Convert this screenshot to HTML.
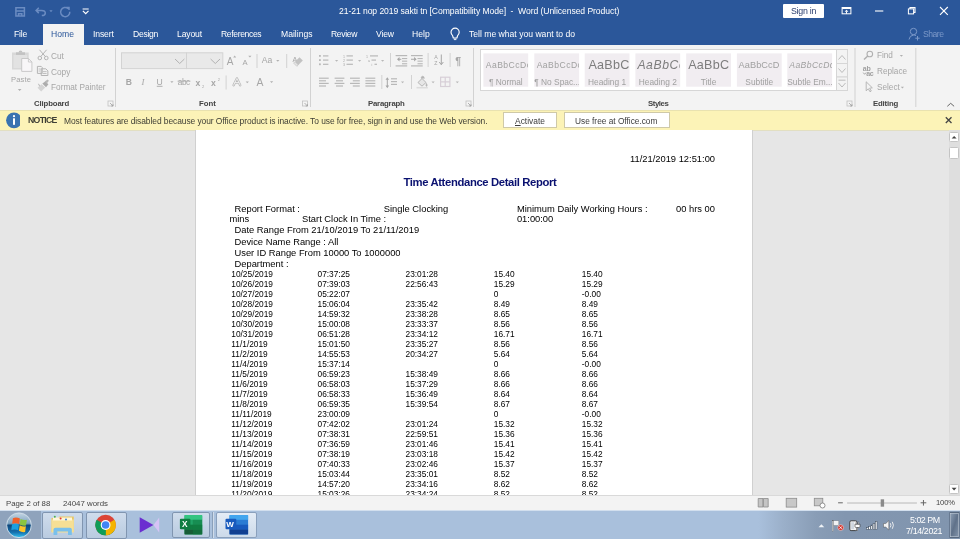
<!DOCTYPE html>
<html><head><meta charset="utf-8">
<style>
*{margin:0;padding:0;box-sizing:border-box}
html,body{width:960px;height:539px;overflow:hidden;background:#e6e6e6;font-family:"Liberation Sans",sans-serif}
.a{position:absolute;white-space:nowrap;will-change:transform}
#title{left:0;top:0;width:960px;height:45px;background:#2b579a}
#ribbon{left:0;top:45px;width:960px;height:65px;background:#f3f3f3}
#notice{left:0;top:110px;width:960px;height:20px;background:#fcf3b7;border-top:1px solid #e9e2b0}
#docarea{left:0;top:130px;width:960px;height:365px;background:#e6e6e6}
#page{left:195px;top:130px;width:558px;height:365px;background:#fff;border-left:1px solid #d0d0d0;border-right:1px solid #d0d0d0}
#status{left:0;top:495px;width:960px;height:15px;background:#f3f3f3}
#taskbar{left:0;top:510px;width:960px;height:29px;background:linear-gradient(90deg,#a9c0dc 0%,#a9c0dc 79%,#9bb0ca 81.5%,#899db6 85%,#8296b0 88%,#8195ae 100%);border-top:1px solid #d2dfee}
.tab{color:#fff;font-size:8.6px;top:29px}
.ui{color:#a6a6a6;font-size:8.6px}
.grp{color:#444;font-size:8.6px;font-weight:bold}
.sep{background:#d5d5d5;width:1px}
.doc{font-size:9.35px;color:#000}
.tb{font-size:8.34px;color:#000}
</style></head><body>
<div id="title" class="a"></div>
<div id="ribbon" class="a"></div>

<!-- QAT -->
<svg class="a" style="left:0;top:0" width="100" height="22" viewBox="0 0 100 22">
 <g fill="none" stroke="#6b8cc2" stroke-width="1.5">
  <path d="M15.9 7.8 H24.4 V15.9 H15.9 Z"/>
  <path d="M15.9 11 H24.4"/>
  <path d="M18.5 15.9 V13.8 H21.8 V15.9"/>
  <path d="M36.3 10.4 H41.5 Q45.3 10.4 45.3 13 Q45.3 15.6 41.8 15.6 M38.8 7.7 L36.1 10.4 L38.8 13.1"/>
  <path d="M68.2 8.6 A4.6 4.6 0 1 0 69.8 11.7 M66.4 7.4 L69 7.4 L69 10"/>
 </g>
 <path d="M49.4 10.3 H52.6 L51 12.2 Z" fill="#6b8cc2"/>
 <path d="M82.6 9 H88.7 M82.9 10.8 L85.7 13.7 L88.5 10.8" fill="none" stroke="#fff" stroke-width="1.2"/>
</svg>
<div class="a" style="left:338.7px;top:6px;color:#fff;font-size:8.6px;letter-spacing:-0.07px">21-21 nop 2019 sakti tn [Compatibility Mode]&nbsp; -&nbsp; Word (Unlicensed Product)</div>
<div class="a" style="left:783px;top:4px;width:41px;height:13.5px;background:#fff;border-radius:1px;color:#2e4170;font-size:8.8px;text-align:center;line-height:15px;letter-spacing:-0.25px">Sign in</div>
<svg class="a" style="left:835px;top:0" width="125" height="22" viewBox="835 0 125 22">
 <rect x="842.1" y="7.5" width="8.8" height="6.3" fill="none" stroke="#fff" stroke-width="1"/>
 <rect x="842.1" y="7.2" width="8.8" height="1.8" fill="#fff"/>
 <path d="M844.6 11.8 L846.5 9.8 L848.4 11.8 Z" fill="#fff"/>
 <path d="M846.5 11.5 V13.8" stroke="#fff" stroke-width="1"/>
 <path d="M875 11 H883.3" stroke="#fff" stroke-width="1.1"/>
 <rect x="908.4" y="8.9" width="5.2" height="5" fill="none" stroke="#fff" stroke-width="1"/>
 <path d="M910 8.9 V7.6 H915 V12.4 H913.6" fill="none" stroke="#fff" stroke-width="1.1"/>
 <path d="M940 7 L947.8 14.8 M947.8 7 L940 14.8" stroke="#fff" stroke-width="1.1"/>
</svg>
<!-- tabs -->
<div class="a" style="left:43px;top:24px;width:40.5px;height:21px;background:#f3f3f3"></div>
<div class="a tab" style="left:13.7px;letter-spacing:-0.15px">File</div>
<div class="a tab" style="left:51.3px;color:#2b579a">Home</div>
<div class="a tab" style="left:93px;letter-spacing:-0.12px">Insert</div>
<div class="a tab" style="left:132.5px;letter-spacing:-0.29px">Design</div>
<div class="a tab" style="left:177px;letter-spacing:-0.13px">Layout</div>
<div class="a tab" style="left:221px;letter-spacing:-0.37px">References</div>
<div class="a tab" style="left:280.5px">Mailings</div>
<div class="a tab" style="left:330.7px;letter-spacing:-0.36px">Review</div>
<div class="a tab" style="left:375.5px;letter-spacing:-0.18px">View</div>
<div class="a tab" style="left:412px">Help</div>
<svg class="a" style="left:445px;top:24px" width="20" height="20" viewBox="445 24 20 20">
 <path d="M453.3 38 L452.6 35.6 Q451 34.2 451 32.3 A4.1 4.1 0 0 1 459.2 32.3 Q459.2 34.2 457.6 35.6 L456.9 38 Z" fill="none" stroke="#fff" stroke-width="1.15" stroke-linejoin="round"/>
 <path d="M453.8 39.3 H456.4" stroke="#dfe6f2" stroke-width="1.6"/>
</svg>
<div class="a tab" style="left:468.7px">Tell me what you want to do</div>
<svg class="a" style="left:908px;top:27px" width="14" height="14" viewBox="0 0 14 14">
 <circle cx="5.5" cy="4.5" r="3.2" fill="none" stroke="#7b98c8" stroke-width="1"/>
 <path d="M1 12.5 Q1.5 8.5 5.5 8 Q7 8 8 8.6 M9.5 9 V13.5 M7.3 11.2 H11.7" fill="none" stroke="#7b98c8" stroke-width="1"/>
</svg>
<div class="a tab" style="left:922.8px;color:#7b98c8;letter-spacing:-0.5px">Share</div>


<!-- ribbon icons -->
<svg class="a" style="left:0;top:45px" width="960" height="65" viewBox="0 45 960 65">
 <g id="seps" fill="#d2d2d2">
  <rect x="115" y="48" width="1" height="59"/>
  <rect x="310" y="48" width="1" height="59"/>
  <rect x="473" y="48" width="1" height="59"/>
  <rect x="854.5" y="48" width="1" height="59"/>
  <rect x="915.3" y="48" width="1" height="59"/>
  <rect x="256.5" y="54" width="1" height="14"/>
  <rect x="286.2" y="54" width="1" height="14"/>
  <rect x="225.6" y="75.5" width="1" height="14"/>
  <rect x="390" y="53" width="1" height="14"/>
  <rect x="427.6" y="53" width="1" height="14"/>
  <rect x="449.6" y="53" width="1" height="14"/>
  <rect x="381.3" y="75" width="1" height="14"/>
  <rect x="411" y="75" width="1" height="14"/>
 </g>
 <!-- clipboard -->
 <rect x="12" y="52.5" width="16.7" height="17" fill="#d8d8d8"/>
 <rect x="13.5" y="55" width="13.7" height="13" fill="#e2e2e2"/>
 <rect x="16" y="52.3" width="9" height="2.6" fill="#c2c2c2"/>
 <path d="M18.6 52.5 Q18.6 50.6 20.5 50.6 Q22.4 50.6 22.4 52.5 Z" fill="#c2c2c2"/>
 <path d="M21.7 58.5 H28.4 L31.9 62 V71.4 H21.7 Z" fill="#f8f6f8" stroke="#c4c4c4" stroke-width="0.9"/>
 <path d="M28.4 58.5 V62 H31.9" fill="none" stroke="#c4c4c4" stroke-width="0.8"/>
 <path d="M17.8 89 H21.5 L19.65 91 Z" fill="#b0b0b0"/>
 <g fill="none" stroke="#b4b4b4" stroke-width="1">
  <path d="M39.5 49.8 L45.3 56.5 M46.6 49.8 L40.8 56.5"/>
  <circle cx="39.8" cy="58" r="1.8"/><circle cx="46.3" cy="58" r="1.8"/>
  <path d="M37.4 66.4 H41.2 L42.2 67.4 V73.4 H37.4 Z"/>
  <path d="M41.2 68.8 H45.8 L47.9 70.9 V75.5 H41.2 Z"/>
  <path d="M38.6 69 H40.6 M38.6 71 H40.2 M42.7 71.6 H46.6 M42.7 73.5 H46.6" stroke-width="0.8"/>
  <path d="M38.5 83.8 L40.8 88.5"/>
 </g>
 <path d="M37.5 87.8 L41.6 84.2 L45.2 87.6 L41.2 91.6 Z" fill="#d4d4d4"/>
 <path d="M42.3 83.6 L45.3 81.4 L48.4 84.2 L46 87.2 Z" fill="#acacac"/>
 <path d="M44.6 81.6 L47.6 79.5 L48.9 80.8 L46.8 83.6 Z" fill="#b8b8b8"/>
 <rect x="108" y="101" width="5" height="5" fill="none" stroke="#c0c0c0" stroke-width="0.8"/>
 <path d="M110 103 L113 106 M111.2 106 H113 V104.2" fill="none" stroke="#a0a0a0" stroke-width="0.8"/>
 <!-- font -->
 <rect x="121.5" y="52.8" width="65" height="15.8" fill="#e9e9e9" stroke="#d3d3d3" stroke-width="1"/>
 <rect x="186.5" y="52.8" width="36.3" height="15.8" fill="#e9e9e9" stroke="#d3d3d3" stroke-width="1"/>
 <path d="M175 59 L179.7 63.5 L184.4 59 M210.6 59 L215.3 63.5 L220 59" fill="none" stroke="#ababab" stroke-width="0.9"/>
 <g fill="#a6a6a6" font-family="Liberation Sans" >
  <text x="226.8" y="64.8" font-size="10">A</text>
  <text x="242.6" y="64.8" font-size="7.6">A</text>
  <text x="261.8" y="63.3" font-size="8.6">Aa</text>
  <text x="125.8" y="84.9" font-size="8.6" font-weight="bold">B</text>
  <text x="141.6" y="84.9" font-size="8.8" font-style="italic" font-family="Liberation Serif">I</text>
  <text x="156.6" y="84.9" font-size="8.6">U</text>
  <text x="177.8" y="84.9" font-size="8.2" letter-spacing="-0.4">abc</text>
  <text x="195.4" y="85.5" font-size="8.6" font-weight="bold">x</text>
  <text x="211" y="85.5" font-size="8.6" font-weight="bold">x</text>
  <text x="202" y="87.5" font-size="4">2</text>
  <text x="217.8" y="81" font-size="4">2</text>
  <text x="256.6" y="86" font-size="10.4">A</text>
 </g>
 <path d="M156.8 86.3 H162.5" stroke="#a6a6a6" stroke-width="0.9"/>
 <path d="M177.5 81.2 H190.5" stroke="#a6a6a6" stroke-width="0.7"/>
 <path d="M233.6 85.2 L236.9 78.4 L240.2 85.2 M234.9 82.6 H238.9" fill="none" stroke="#b8b8b8" stroke-width="2.4" stroke-linejoin="round" stroke-linecap="round"/>
 <path d="M233.6 85.2 L236.9 78.4 L240.2 85.2 M234.9 82.6 H238.9" fill="none" stroke="#f3f3f3" stroke-width="0.9" stroke-linejoin="round" stroke-linecap="round"/>
 <g fill="#b0b0b0">
  <path d="M233.2 57.4 L234.7 55.6 L236.2 57.4 Z"/>
  <path d="M248.3 55.8 H251.5 L249.9 57.6 Z"/>
  <path d="M276.2 60 H279.4 L277.8 61.8 Z"/>
  <path d="M170.3 81.3 H173.5 L171.9 83.1 Z"/>
  <path d="M245.7 81.4 H248.9 L247.3 83.2 Z"/>
  <path d="M270 81.2 H273.2 L271.6 83 Z"/>
 </g>
 <text x="292.6" y="62.3" font-size="7.2" fill="#a6a6a6" font-family="Liberation Sans">A</text>
 <path d="M299.5 57.2 L302.8 60.5 L298.3 65 L295 61.7 Z" fill="#c2c2c2"/>
 <path d="M295 61.7 L298.3 65 L296.8 66.3 L293.6 63.1 Z" fill="#e4e4e4" stroke="#b8b8b8" stroke-width="0.6"/>
 <rect x="302.5" y="101" width="5" height="5" fill="none" stroke="#c0c0c0" stroke-width="0.8"/>
 <path d="M304.5 103 L307.5 106 M305.7 106 H307.5 V104.2" fill="none" stroke="#a0a0a0" stroke-width="0.8"/>
 <!-- paragraph -->
 <g fill="#b8b8b8">
  <rect x="319" y="55" width="1.8" height="1.8"/><rect x="319" y="59.2" width="1.8" height="1.8"/><rect x="319" y="63.4" width="1.8" height="1.8"/>
  <rect x="323" y="55.3" width="5.4" height="1.2"/><rect x="323" y="59.5" width="5.4" height="1.2"/><rect x="323" y="63.7" width="5.4" height="1.2"/>
  <rect x="346.5" y="55.3" width="6.4" height="1.2"/><rect x="346.5" y="59.5" width="6.4" height="1.2"/><rect x="346.5" y="63.7" width="6.4" height="1.2"/>
  <rect x="370" y="55.3" width="8" height="1.2"/><rect x="371.5" y="59.5" width="4.5" height="1.2"/><rect x="374.5" y="63.7" width="2.5" height="1.2"/>
  <rect x="395.6" y="55" width="11.6" height="1.2"/><rect x="402" y="58" width="5.2" height="1.1"/><rect x="402" y="60.6" width="5.2" height="1.1"/><rect x="402" y="63.2" width="5.2" height="1.1"/><rect x="395.6" y="65.3" width="11.6" height="1.2"/>
  <rect x="411" y="55" width="11.7" height="1.2"/><rect x="417.5" y="58" width="5.2" height="1.1"/><rect x="417.5" y="60.6" width="5.2" height="1.1"/><rect x="417.5" y="63.2" width="5.2" height="1.1"/><rect x="411" y="65.3" width="11.7" height="1.2"/>
  <rect x="319" y="77.6" width="9.7" height="1.2"/><rect x="319" y="80.2" width="7" height="1.2"/><rect x="319" y="82.8" width="9.7" height="1.2"/><rect x="319" y="85.4" width="7" height="1.2"/>
  <rect x="334.6" y="77.6" width="9.8" height="1.2"/><rect x="336" y="80.2" width="7" height="1.2"/><rect x="334.6" y="82.8" width="9.8" height="1.2"/><rect x="336" y="85.4" width="7" height="1.2"/>
  <rect x="350" y="77.6" width="9.8" height="1.2"/><rect x="352.8" y="80.2" width="7" height="1.2"/><rect x="350" y="82.8" width="9.8" height="1.2"/><rect x="352.8" y="85.4" width="7" height="1.2"/>
  <rect x="365.4" y="77.6" width="9.9" height="1.2"/><rect x="365.4" y="80.2" width="9.9" height="1.2"/><rect x="365.4" y="82.8" width="9.9" height="1.2"/><rect x="365.4" y="85.4" width="9.9" height="1.2"/>
  <rect x="391" y="78.2" width="6" height="1.2"/><rect x="391" y="81" width="6" height="1.2"/><rect x="391" y="83.8" width="6" height="1.2"/>
  <path d="M335 60 H338.2 L336.6 61.8 Z M358 60 H361.2 L359.6 61.8 Z M381 60 H384.2 L382.6 61.8 Z M401 81.5 H404.2 L402.6 83.3 Z M431.5 81.5 H434.7 L433.1 83.3 Z M455.7 81.5 H458.9 L457.3 83.3 Z"/>
 </g>
 <g font-family="Liberation Sans" fill="#a8a8a8" font-size="3.6">
  <text x="343" y="57.5">1</text><text x="343" y="61.7">2</text><text x="343" y="65.9">3</text>
  <text x="366" y="57.5">1</text><text x="368" y="61.7">a</text><text x="371.5" y="65.9">i</text>
 </g>
 <path d="M397 59.2 L399.5 57 V61.4 Z M416.6 59.2 L414.1 57 V61.4 Z" fill="#a6a6a6"/>
 <path d="M399 59.2 H401.3 M411 59.2 H414.3" stroke="#a6a6a6" stroke-width="1.1"/>
 <path d="M387.3 79 V86.5" stroke="#a6a6a6" stroke-width="1"/>
 <path d="M385.5 79.8 L387.3 77.2 L389.1 79.8 Z M385.5 85.6 L387.3 88.2 L389.1 85.6 Z" fill="#a6a6a6"/>
 <g font-family="Liberation Sans" fill="#a6a6a6">
  <text x="434.2" y="59.3" font-size="5.2">A</text>
  <text x="434.2" y="65" font-size="5.2">Z</text>
  <text x="455.3" y="65" font-size="10.6" font-weight="bold">¶</text>
 </g>
 <path d="M441.3 54.5 V64.3" stroke="#a6a6a6" stroke-width="1"/>
 <path d="M439.3 62 L441.3 64.8 L443.3 62" fill="none" stroke="#a6a6a6" stroke-width="1"/>
 <path d="M418 82.5 L422 78.5 L426 82.5 L422 86.2 Z" fill="#e6e6e6" stroke="#b4b4b4" stroke-width="1"/>
 <path d="M421.5 78.6 Q420.5 76.8 422.5 76.3 Q424.2 76.2 424.3 78.6 M426.5 83.5 Q427.7 85.5 426.6 86.4 Q425.4 85.6 426.5 83.5" fill="#b4b4b4" stroke="#b4b4b4" stroke-width="0.8"/>
 <path d="M416.5 87.7 H427.8" stroke="#dcdcdc" stroke-width="1.6"/>
 <rect x="440.6" y="77.2" width="9.3" height="9.3" fill="none" stroke="#d7cfd7" stroke-width="1.2"/>
 <path d="M445.25 77.2 V86.5 M440.6 81.85 H449.9" stroke="#d7cfd7" stroke-width="1.2"/>
 <rect x="466" y="101" width="5" height="5" fill="none" stroke="#c0c0c0" stroke-width="0.8"/>
 <path d="M468 103 L471 106 M469.2 106 H471 V104.2" fill="none" stroke="#a0a0a0" stroke-width="0.8"/>
 <!-- styles gallery -->
 <rect x="480.5" y="49.5" width="367" height="41" fill="#fff" stroke="#d6d6d6" stroke-width="1"/>
 <g fill="#f1edf1">
  <rect x="483.4" y="53.4" width="44.8" height="33.3"/>
  <rect x="534.3" y="53.4" width="44.8" height="33.3"/>
  <rect x="584.7" y="53.4" width="44.8" height="33.3"/>
  <rect x="635.4" y="53.4" width="44.8" height="33.3"/>
  <rect x="686.2" y="53.4" width="44.8" height="33.3"/>
  <rect x="736.9" y="53.4" width="44.8" height="33.3"/>
  <rect x="787.3" y="53.4" width="44.8" height="33.3"/>
 </g>
 <g fill="#f3f3f3" stroke="#d6d6d6" stroke-width="1">
  <rect x="836.5" y="49.5" width="11" height="14"/>
  <rect x="836.5" y="63.5" width="11" height="13.5"/>
  <rect x="836.5" y="77" width="11" height="13.5"/>
 </g>
 <path d="M838.5 59.5 L842 55.5 L845.5 59.5 M838.5 68.5 L842 72.5 L845.5 68.5 M838.5 80.2 H845.5 M838.5 83 L842 87 L845.5 83" fill="none" stroke="#b4b4b4" stroke-width="0.9"/>
 <rect x="847" y="101" width="5" height="5" fill="none" stroke="#c0c0c0" stroke-width="0.8"/>
 <path d="M849 103 L852 106 M850.2 106 H852 V104.2" fill="none" stroke="#a0a0a0" stroke-width="0.8"/>
 <!-- editing -->
 <circle cx="869.8" cy="54" r="2.8" fill="none" stroke="#b0b0b0" stroke-width="1.1"/>
 <path d="M867.8 56 L864 59.5" stroke="#b0b0b0" stroke-width="1.5"/>
 <path d="M899.8 55 H903 L901.4 56.8 Z M900.8 86.8 H904 L902.4 88.6 Z" fill="#b0b0b0"/>
 <g font-family="Liberation Sans" fill="#a0a0a0" font-size="7" font-weight="bold" letter-spacing="-0.3">
  <text x="862.8" y="71">ab</text><text x="866.2" y="76.2">ac</text>
 </g>
 <path d="M863.2 72.6 L864.6 74.3 L866 72.6" fill="none" stroke="#a0a0a0" stroke-width="0.9"/>
 <path d="M866.2 81.8 V90.8 L868.3 88.8 L870 91.8 L871.3 91 L869.6 88.2 L872.3 87.8 Z" fill="none" stroke="#b0b0b0" stroke-width="0.9"/>
 <path d="M947.3 106.3 L950.7 103.3 L954.1 106.3" fill="none" stroke="#666" stroke-width="1"/>
</svg>
<div class="a ui" style="left:10.7px;top:75px;font-size:7.6px;letter-spacing:0.15px">Paste</div>
<div class="a ui" style="left:50.8px;top:50.6px;font-size:8.3px">Cut</div>
<div class="a ui" style="left:50.8px;top:66.8px;font-size:8.3px">Copy</div>
<div class="a ui" style="left:50.8px;top:83.2px;font-size:8.25px">Format Painter</div>
<div class="a grp" style="left:33.9px;top:99.2px;font-size:7.8px;letter-spacing:-0.14px">Clipboard</div>
<div class="a grp" style="left:199.1px;top:99.2px;font-size:7.8px;letter-spacing:-0.05px">Font</div>
<div class="a grp" style="left:367.8px;top:99.2px;font-size:7.8px;letter-spacing:-0.22px">Paragraph</div>
<div class="a grp" style="left:648px;top:99.2px;font-size:7.8px;letter-spacing:-0.45px">Styles</div>
<div class="a grp" style="left:872.7px;top:99.2px;font-size:7.8px;letter-spacing:-0.2px">Editing</div>
<div class="a ui" style="left:876.7px;top:50.6px;font-size:8.2px">Find</div>
<div class="a ui" style="left:876.7px;top:66.8px;font-size:8.2px">Replace</div>
<div class="a ui" style="left:876.7px;top:82.6px;font-size:8.2px">Select</div>


<style>
.sty{position:absolute;overflow:hidden;white-space:nowrap;color:#a0a0a0;top:53.4px;height:33.3px;width:44.8px}
.sty .s1{position:absolute;left:2.4px;top:7.1px;font-size:8.6px;letter-spacing:0.45px}
.sty .s2{position:absolute;left:0;width:44.8px;text-align:center;top:23.3px;font-size:8.35px}
.sty .big{position:absolute;left:3.7px;top:5px;font-size:12.6px;letter-spacing:0.25px;color:#7d7d7d}
</style>
<div class="sty" style="left:483.4px"><span class="s1">AaBbCcDc</span><span class="s2">¶ Normal</span></div>
<div class="sty" style="left:534.3px"><span class="s1">AaBbCcDc</span><span class="s2">¶ No Spac...</span></div>
<div class="sty" style="left:584.7px"><span class="big">AaBbC</span><span class="s2">Heading 1</span></div>
<div class="sty" style="left:635.4px"><span class="big" style="font-style:italic;left:2px;font-size:12.2px;letter-spacing:0.6px">AaBbCc</span><span class="s2">Heading 2</span></div>
<div class="sty" style="left:686.2px"><span class="big" style="left:2px">AaBbC</span><span class="s2">Title</span></div>
<div class="sty" style="left:736.9px"><span class="s1" style="left:1.6px;top:6.4px;font-size:9.2px;letter-spacing:0.1px">AaBbCcD</span><span class="s2">Subtitle</span></div>
<div class="sty" style="left:787.3px"><span class="s1" style="font-style:italic;left:2px;top:6.2px;font-size:8.6px;letter-spacing:0.4px">AaBbCcDc</span><span class="s2">Subtle Em...</span></div>

<div id="notice" class="a"></div>

<svg class="a" style="left:0;top:110px" width="20" height="20" viewBox="0 110 20 20">
 <circle cx="14" cy="120.3" r="7.9" fill="#3a73b0"/>
 <circle cx="14" cy="116.2" r="1.1" fill="#fff"/>
 <rect x="13" y="118.3" width="2" height="6.5" fill="#fff"/>
</svg>
<div class="a" style="left:28px;top:115.2px;font-size:8.7px;font-weight:bold;color:#404036;letter-spacing:-0.7px">NOTICE</div>
<div class="a" style="left:63.7px;top:116.3px;font-size:8.43px;color:#404036;letter-spacing:-0.066px">Most features are disabled because your Office product is inactive. To use for free, sign in and use the Web version.</div>
<div class="a" style="left:502.9px;top:112.3px;width:54.2px;height:15.6px;background:#fff;border:1px solid #cfc9a8"></div>
<div class="a" style="left:563.7px;top:112.3px;width:106.1px;height:15.6px;background:#fff;border:1px solid #cfc9a8"></div>
<div class="a" style="left:514.7px;top:116.2px;font-size:8.43px;color:#3c3c3c"><u>A</u>ctivate</div>
<div class="a" style="left:575.1px;top:116.2px;font-size:8.3px;color:#3c3c3c">Use free at Office.com</div>
<svg class="a" style="left:940px;top:112px" width="18" height="16" viewBox="940 112 18 16">
 <path d="M945.8 117.3 L951.5 123 M951.5 117.3 L945.8 123" stroke="#444" stroke-width="1.3"/>
</svg>

<div id="docarea" class="a"></div>
<div class="a" style="left:0;top:130px;width:960px;height:1px;background:#e2dfc2"></div>
<div id="page" class="a"></div>

<svg class="a" style="left:0;top:130px" width="960" height="365" viewBox="0 130 960 365">
 <g font-family="Liberation Sans" fill="#000">
  <g font-size="9.35">
   <text x="630" y="161.9">11/21/2019 12:51:00</text>
   <text x="234.5" y="212">Report Format :</text>
   <text x="383.8" y="212">Single Clocking</text>
   <text x="516.9" y="212">Minimum Daily Working Hours :</text>
   <text x="676" y="212">00 hrs 00</text>
   <text x="229.5" y="222">mins</text>
   <text x="302" y="222">Start Clock In Time :</text>
   <text x="516.9" y="222">01:00:00</text>
   <text x="234.5" y="232.5">Date Range From 21/10/2019 To 21/11/2019</text>
   <text x="234.5" y="244.5">Device Name Range : All</text>
   <text x="234.5" y="255.8">User ID Range From 10000 To 1000000</text>
   <text x="234.5" y="267">Department :</text>
  </g>
  <text x="403.4" y="185.6" font-size="11.3" font-weight="bold" fill="#0a1170" letter-spacing="-0.37">Time Attendance Detail Report</text>
  <g font-size="8.34">
<text x="231.3" y="277.30">10/25/2019</text>
<text x="317.5" y="277.30">07:37:25</text>
<text x="405.5" y="277.30">23:01:28</text>
<text x="493.8" y="277.30">15.40</text>
<text x="581.8" y="277.30">15.40</text>
<text x="231.3" y="287.30">10/26/2019</text>
<text x="317.5" y="287.30">07:39:03</text>
<text x="405.5" y="287.30">22:56:43</text>
<text x="493.8" y="287.30">15.29</text>
<text x="581.8" y="287.30">15.29</text>
<text x="231.3" y="297.30">10/27/2019</text>
<text x="317.5" y="297.30">05:22:07</text>
<text x="493.8" y="297.30">0</text>
<text x="581.8" y="297.30">-0.00</text>
<text x="231.3" y="307.30">10/28/2019</text>
<text x="317.5" y="307.30">15:06:04</text>
<text x="405.5" y="307.30">23:35:42</text>
<text x="493.8" y="307.30">8.49</text>
<text x="581.8" y="307.30">8.49</text>
<text x="231.3" y="317.30">10/29/2019</text>
<text x="317.5" y="317.30">14:59:32</text>
<text x="405.5" y="317.30">23:38:28</text>
<text x="493.8" y="317.30">8.65</text>
<text x="581.8" y="317.30">8.65</text>
<text x="231.3" y="327.30">10/30/2019</text>
<text x="317.5" y="327.30">15:00:08</text>
<text x="405.5" y="327.30">23:33:37</text>
<text x="493.8" y="327.30">8.56</text>
<text x="581.8" y="327.30">8.56</text>
<text x="231.3" y="337.30">10/31/2019</text>
<text x="317.5" y="337.30">06:51:28</text>
<text x="405.5" y="337.30">23:34:12</text>
<text x="493.8" y="337.30">16.71</text>
<text x="581.8" y="337.30">16.71</text>
<text x="231.3" y="347.30">11/1/2019</text>
<text x="317.5" y="347.30">15:01:50</text>
<text x="405.5" y="347.30">23:35:27</text>
<text x="493.8" y="347.30">8.56</text>
<text x="581.8" y="347.30">8.56</text>
<text x="231.3" y="357.30">11/2/2019</text>
<text x="317.5" y="357.30">14:55:53</text>
<text x="405.5" y="357.30">20:34:27</text>
<text x="493.8" y="357.30">5.64</text>
<text x="581.8" y="357.30">5.64</text>
<text x="231.3" y="367.30">11/4/2019</text>
<text x="317.5" y="367.30">15:37:14</text>
<text x="493.8" y="367.30">0</text>
<text x="581.8" y="367.30">-0.00</text>
<text x="231.3" y="377.30">11/5/2019</text>
<text x="317.5" y="377.30">06:59:23</text>
<text x="405.5" y="377.30">15:38:49</text>
<text x="493.8" y="377.30">8.66</text>
<text x="581.8" y="377.30">8.66</text>
<text x="231.3" y="387.30">11/6/2019</text>
<text x="317.5" y="387.30">06:58:03</text>
<text x="405.5" y="387.30">15:37:29</text>
<text x="493.8" y="387.30">8.66</text>
<text x="581.8" y="387.30">8.66</text>
<text x="231.3" y="397.30">11/7/2019</text>
<text x="317.5" y="397.30">06:58:33</text>
<text x="405.5" y="397.30">15:36:49</text>
<text x="493.8" y="397.30">8.64</text>
<text x="581.8" y="397.30">8.64</text>
<text x="231.3" y="407.30">11/8/2019</text>
<text x="317.5" y="407.30">06:59:35</text>
<text x="405.5" y="407.30">15:39:54</text>
<text x="493.8" y="407.30">8.67</text>
<text x="581.8" y="407.30">8.67</text>
<text x="231.3" y="417.30">11/11/2019</text>
<text x="317.5" y="417.30">23:00:09</text>
<text x="493.8" y="417.30">0</text>
<text x="581.8" y="417.30">-0.00</text>
<text x="231.3" y="427.30">11/12/2019</text>
<text x="317.5" y="427.30">07:42:02</text>
<text x="405.5" y="427.30">23:01:24</text>
<text x="493.8" y="427.30">15.32</text>
<text x="581.8" y="427.30">15.32</text>
<text x="231.3" y="437.30">11/13/2019</text>
<text x="317.5" y="437.30">07:38:31</text>
<text x="405.5" y="437.30">22:59:51</text>
<text x="493.8" y="437.30">15.36</text>
<text x="581.8" y="437.30">15.36</text>
<text x="231.3" y="447.30">11/14/2019</text>
<text x="317.5" y="447.30">07:36:59</text>
<text x="405.5" y="447.30">23:01:46</text>
<text x="493.8" y="447.30">15.41</text>
<text x="581.8" y="447.30">15.41</text>
<text x="231.3" y="457.30">11/15/2019</text>
<text x="317.5" y="457.30">07:38:19</text>
<text x="405.5" y="457.30">23:03:18</text>
<text x="493.8" y="457.30">15.42</text>
<text x="581.8" y="457.30">15.42</text>
<text x="231.3" y="467.30">11/16/2019</text>
<text x="317.5" y="467.30">07:40:33</text>
<text x="405.5" y="467.30">23:02:46</text>
<text x="493.8" y="467.30">15.37</text>
<text x="581.8" y="467.30">15.37</text>
<text x="231.3" y="477.30">11/18/2019</text>
<text x="317.5" y="477.30">15:03:44</text>
<text x="405.5" y="477.30">23:35:01</text>
<text x="493.8" y="477.30">8.52</text>
<text x="581.8" y="477.30">8.52</text>
<text x="231.3" y="487.30">11/19/2019</text>
<text x="317.5" y="487.30">14:57:20</text>
<text x="405.5" y="487.30">23:34:16</text>
<text x="493.8" y="487.30">8.62</text>
<text x="581.8" y="487.30">8.62</text>
<text x="231.3" y="497.30">11/20/2019</text>
<text x="317.5" y="497.30">15:03:26</text>
<text x="405.5" y="497.30">23:34:24</text>
<text x="493.8" y="497.30">8.52</text>
<text x="581.8" y="497.30">8.52</text>
  </g>
 </g>
</svg>

<div id="status" class="a"></div>

<!-- scrollbar -->
<div class="a" style="left:948.7px;top:130px;width:11.3px;height:365px;background:#dedede"></div>
<div class="a" style="left:949px;top:132.2px;width:10.2px;height:10.3px;background:#fff;border:1px solid #c4c4c4;border-radius:1.5px"></div>
<div class="a" style="left:949px;top:146.5px;width:10.2px;height:11.8px;background:#fff;border:1px solid #c4c4c4;border-radius:1.5px"></div>
<div class="a" style="left:949px;top:483.5px;width:10.2px;height:10.3px;background:#fff;border:1px solid #c4c4c4;border-radius:1.5px"></div>
<svg class="a" style="left:940px;top:130px" width="20" height="365" viewBox="940 130 20 365">
 <path d="M951.6 138.6 L954.1 136 L956.6 138.6 Z" fill="#444"/>
 <path d="M951.6 487.8 H956.6 L954.1 490.4 Z" fill="#444"/>
</svg>
<!-- status bar -->
<div class="a" style="left:0;top:495px;width:960px;height:1px;background:#d9d9d9"></div>
<div class="a" style="left:5.6px;top:498.5px;font-size:7.8px;color:#444">Page 2 of 88</div>
<div class="a" style="left:63.3px;top:498.5px;font-size:7.85px;color:#444">24047 words</div>
<svg class="a" style="left:740px;top:495px" width="220" height="16" viewBox="740 495 220 16">
 <path d="M758.2 498.5 H763 V507 H758.2 Z M763.3 498.5 H768.2 V507 H763.3 Z" fill="#c4c4c4" stroke="#8c8c8c" stroke-width="0.8"/>
 <rect x="786.2" y="498.3" width="10.5" height="8.8" fill="#c8c8c8" stroke="#8c8c8c" stroke-width="0.8"/>
 <rect x="814.3" y="498.3" width="8.5" height="7.5" fill="#c8c8c8" stroke="#8c8c8c" stroke-width="0.8"/>
 <circle cx="822.5" cy="505.5" r="2.5" fill="#fff" stroke="#777" stroke-width="0.8"/>
 <path d="M838.1 502.8 H842.8 M920.6 502.8 H926.3 M923.45 500 V505.6" stroke="#666" stroke-width="1"/>
 <path d="M847.1 503 H916.9" stroke="#a8a8a8" stroke-width="0.8"/>
 <rect x="880.7" y="499.3" width="3.4" height="7.4" fill="#8a8a8a"/>
</svg>
<div class="a" style="left:935.5px;top:498.4px;font-size:7.6px;color:#444;letter-spacing:-0.1px">100%</div>

<div id="taskbar" class="a"></div>

<!-- taskbar items -->
<div class="a" style="left:0;top:511px;width:41px;height:28px;background:#8fa3bc"></div>
<svg class="a" style="left:0;top:510px" width="40" height="29" viewBox="0 510 40 29">
 <defs>
  <linearGradient id="orb" x1="0" y1="0" x2="0" y2="1">
   <stop offset="0" stop-color="#c3d5e3"/><stop offset="0.42" stop-color="#7ea3c0"/><stop offset="0.5" stop-color="#0d477c"/><stop offset="0.78" stop-color="#1570ad"/><stop offset="1" stop-color="#35c4f2"/>
  </linearGradient>
 </defs>
 <circle cx="19" cy="525.3" r="13" fill="#9db3c9"/>
 <circle cx="19" cy="525.3" r="12.3" fill="url(#orb)" stroke="#d0dde8" stroke-width="0.9"/>
 <path d="M12.9 518.3 Q16.2 516.8 19.9 518.6 L19.2 523.9 Q15.8 522.5 12.2 523.7 Z" fill="#f0602a"/>
 <path d="M20.5 518.9 Q23.7 520.4 26.9 519.8 L26 525.6 Q22.8 526.2 19.8 524.5 Z" fill="#8cc63f"/>
 <path d="M12 524.4 Q15.4 523.2 19 524.6 L18.2 530.2 Q14.8 528.9 11.3 530 Z" fill="#1c9fe0"/>
 <path d="M19.7 525.2 Q22.8 526.9 25.9 526.3 L25.1 532 Q21.8 532.6 18.9 530.8 Z" fill="#fdc42a"/>
</svg>
<div class="a" style="left:41.7px;top:511.7px;width:41.2px;height:26.8px;border:1px solid #8095b0;border-radius:2px;background:linear-gradient(#cfdcec,#b9cbe0)"></div>
<div class="a" style="left:85.6px;top:511.7px;width:41px;height:26.8px;border:1px solid #8095b0;border-radius:2px;background:linear-gradient(#cfdcec,#b9cbe0)"></div>
<div class="a" style="left:172.3px;top:511.8px;width:38.2px;height:26px;border:1px solid #8095b0;border-radius:2px;background:linear-gradient(#cfdcec,#b9cbe0)"></div>
<div class="a" style="left:211.8px;top:512px;width:1px;height:26px;background:#8aa0ba"></div>
<div class="a" style="left:213px;top:512px;width:1px;height:26px;background:#d0dcea"></div>
<div class="a" style="left:216.3px;top:511.8px;width:41.3px;height:26px;border:1px solid #8aa0bc;border-radius:2px;background:linear-gradient(#e4ecf6,#ccdaea)"></div>
<svg class="a" style="left:40px;top:510px" width="230" height="29" viewBox="40 510 230 29">
 <!-- explorer folder -->
 <path d="M51.5 518 H58 L59.5 516.5 H73.8 V532 H51.5 Z" fill="#e8c766"/>
 <rect x="51.5" y="519.5" width="22.3" height="13" fill="#f6df95"/>
 <rect x="53" y="517.5" width="19" height="3" fill="#fff7d8"/>
 <circle cx="54.8" cy="516.8" r="1" fill="#4caf50"/><circle cx="60.6" cy="518.4" r="1" fill="#e53935"/><circle cx="66" cy="519.6" r="1" fill="#3f7fd1"/>
 <path d="M53.5 535 V529.5 Q53.5 527.8 55.5 527.8 H70 Q71.8 527.8 71.8 529.5 V535 H68 V531.5 H57.3 V535 Z" fill="#79c0ec"/>
 <!-- chrome -->
 <circle cx="105.6" cy="525" r="10.3" fill="#db4437"/>
 <path d="M105.6 525 L96.7 530.15 A10.3 10.3 0 0 1 96.68 519.85 Z" fill="#0f9d58"/>
 <path d="M105.6 525 L96.7 530.15 A10.3 10.3 0 0 0 114.5 530.15 Z" fill="#0f9d58"/>
 <path d="M105.6 525 L114.5 519.85 A10.3 10.3 0 0 1 105.6 535.3 L105.6 525 Z" fill="#f4b400"/>
 <path d="M105.6 525 L105.6 535.3 A10.3 10.3 0 0 1 96.7 530.15 Z" fill="#0f9d58"/>
 <circle cx="105.6" cy="525" r="4.9" fill="#fff"/>
 <circle cx="105.6" cy="525" r="3.8" fill="#4285f4"/>
 <!-- VS -->
 <path d="M139.7 517.2 L153.5 525 L139.7 532.8 Z" fill="#6b2fd0"/>
 <path d="M153.5 525 L159.2 517.6 V532.4 Z" fill="#d6c3f5"/>
 <!-- excel -->
 <rect x="184.5" y="515" width="17.7" height="19.4" rx="1" fill="#21a366"/>
 <rect x="184.5" y="515" width="17.7" height="4.8" fill="#33c481"/>
 <rect x="184.5" y="524.7" width="17.7" height="4.85" fill="#107c41"/>
 <rect x="184.5" y="529.5" width="17.7" height="4.9" fill="#185c37"/>
 <rect x="192.8" y="519.8" width="9.4" height="14.6" fill="#107c41" opacity="0.55"/>
 <rect x="179.9" y="518.7" width="10.5" height="10.5" rx="1" fill="#107c41"/>
 <text x="181.9" y="527.3" font-family="Liberation Sans" font-weight="bold" font-size="8.3" fill="#fff">X</text>
 <!-- word -->
 <rect x="229.5" y="515" width="18.6" height="19.4" rx="1" fill="#2b7cd3"/>
 <rect x="229.5" y="515" width="18.6" height="4.8" fill="#41a5ee"/>
 <rect x="229.5" y="524.7" width="18.6" height="4.85" fill="#185abd"/>
 <rect x="229.5" y="529.5" width="18.6" height="4.9" fill="#103f91"/>
 <rect x="225.5" y="518.7" width="10.8" height="10.5" rx="1" fill="#185abd"/>
 <text x="226.2" y="527.3" font-family="Liberation Sans" font-weight="bold" font-size="8" fill="#fff">W</text>
</svg>
<svg class="a" style="left:810px;top:510px" width="150" height="29" viewBox="810 510 150 29">
 <path d="M818.5 527.2 L821.4 524.2 L824.3 527.2 Z" fill="#eef2f6"/>
 <rect x="832.2" y="520.6" width="1.3" height="10.6" fill="#e8e8e8" stroke="#555" stroke-width="0.3"/>
 <rect x="833.5" y="520.8" width="5.3" height="4.6" fill="#f2f2f2" stroke="#666" stroke-width="0.3"/>
 <circle cx="840.7" cy="527.6" r="2.9" fill="#d3322c" stroke="#f0f0f0" stroke-width="0.5"/>
 <path d="M839.5 526.4 L841.9 528.8 M841.9 526.4 L839.5 528.8" stroke="#fff" stroke-width="0.9"/>
 <rect x="849.8" y="520.8" width="7.2" height="9.8" rx="1.3" fill="#f2f2f2" stroke="#333" stroke-width="0.9"/>
 <rect x="851.2" y="522.3" width="2.8" height="6.8" fill="#cfd6de"/>
 <path d="M855 524.2 H860 V526.4 Q860 527.6 858.2 527.6 H856.5 Q855 527.6 855 526.4 Z" fill="#fff" stroke="#333" stroke-width="0.6"/>
 <path d="M856.3 524.2 V521.8 M858.6 524.2 V521.8 M857.4 527.6 V531" stroke="#333" stroke-width="0.9"/>
 <path d="M856.3 524 V522 M858.6 524 V522 M857.4 527.8 V530.8" stroke="#fff" stroke-width="0.5"/>
 <g fill="#fff" stroke="#3d4a5a" stroke-width="0.5">
  <rect x="866.5" y="527.6" width="1.7" height="1.7"/>
  <rect x="868.7" y="526.5" width="1.7" height="2.8"/>
  <rect x="870.9" y="525" width="1.7" height="4.3"/>
  <rect x="873.1" y="523.3" width="1.7" height="6"/>
  <rect x="875.3" y="521.4" width="1.7" height="7.9"/>
 </g>
 <path d="M883.5 523.5 H885.8 L888.8 520.6 V530 L885.8 527.1 H883.5 Z" fill="#f4f4f4" stroke="#555" stroke-width="0.5"/>
 <path d="M890.3 523.2 Q891.6 525.3 890.3 527.4 M892.3 521.8 Q894.5 525.3 892.3 528.8" fill="none" stroke="#f4f4f4" stroke-width="0.9"/>
 <defs><linearGradient id="sd" x1="0" y1="0" x2="1" y2="1"><stop offset="0" stop-color="#8b9db3"/><stop offset="0.5" stop-color="#5f7189"/><stop offset="1" stop-color="#8193a9"/></linearGradient></defs>
 <rect x="949.5" y="512.2" width="10" height="25.6" fill="#4f5f74"/>
 <rect x="950.6" y="513.3" width="7.8" height="23.4" fill="url(#sd)" stroke="#c5d1de" stroke-width="0.6"/>
</svg>
<div class="a" style="left:909.9px;top:514.6px;font-size:8.9px;color:#fff;letter-spacing:-0.5px">5:02 PM</div>
<div class="a" style="left:906.3px;top:526.2px;font-size:8.9px;color:#fff;letter-spacing:-0.38px">7/14/2021</div>

</body></html>
